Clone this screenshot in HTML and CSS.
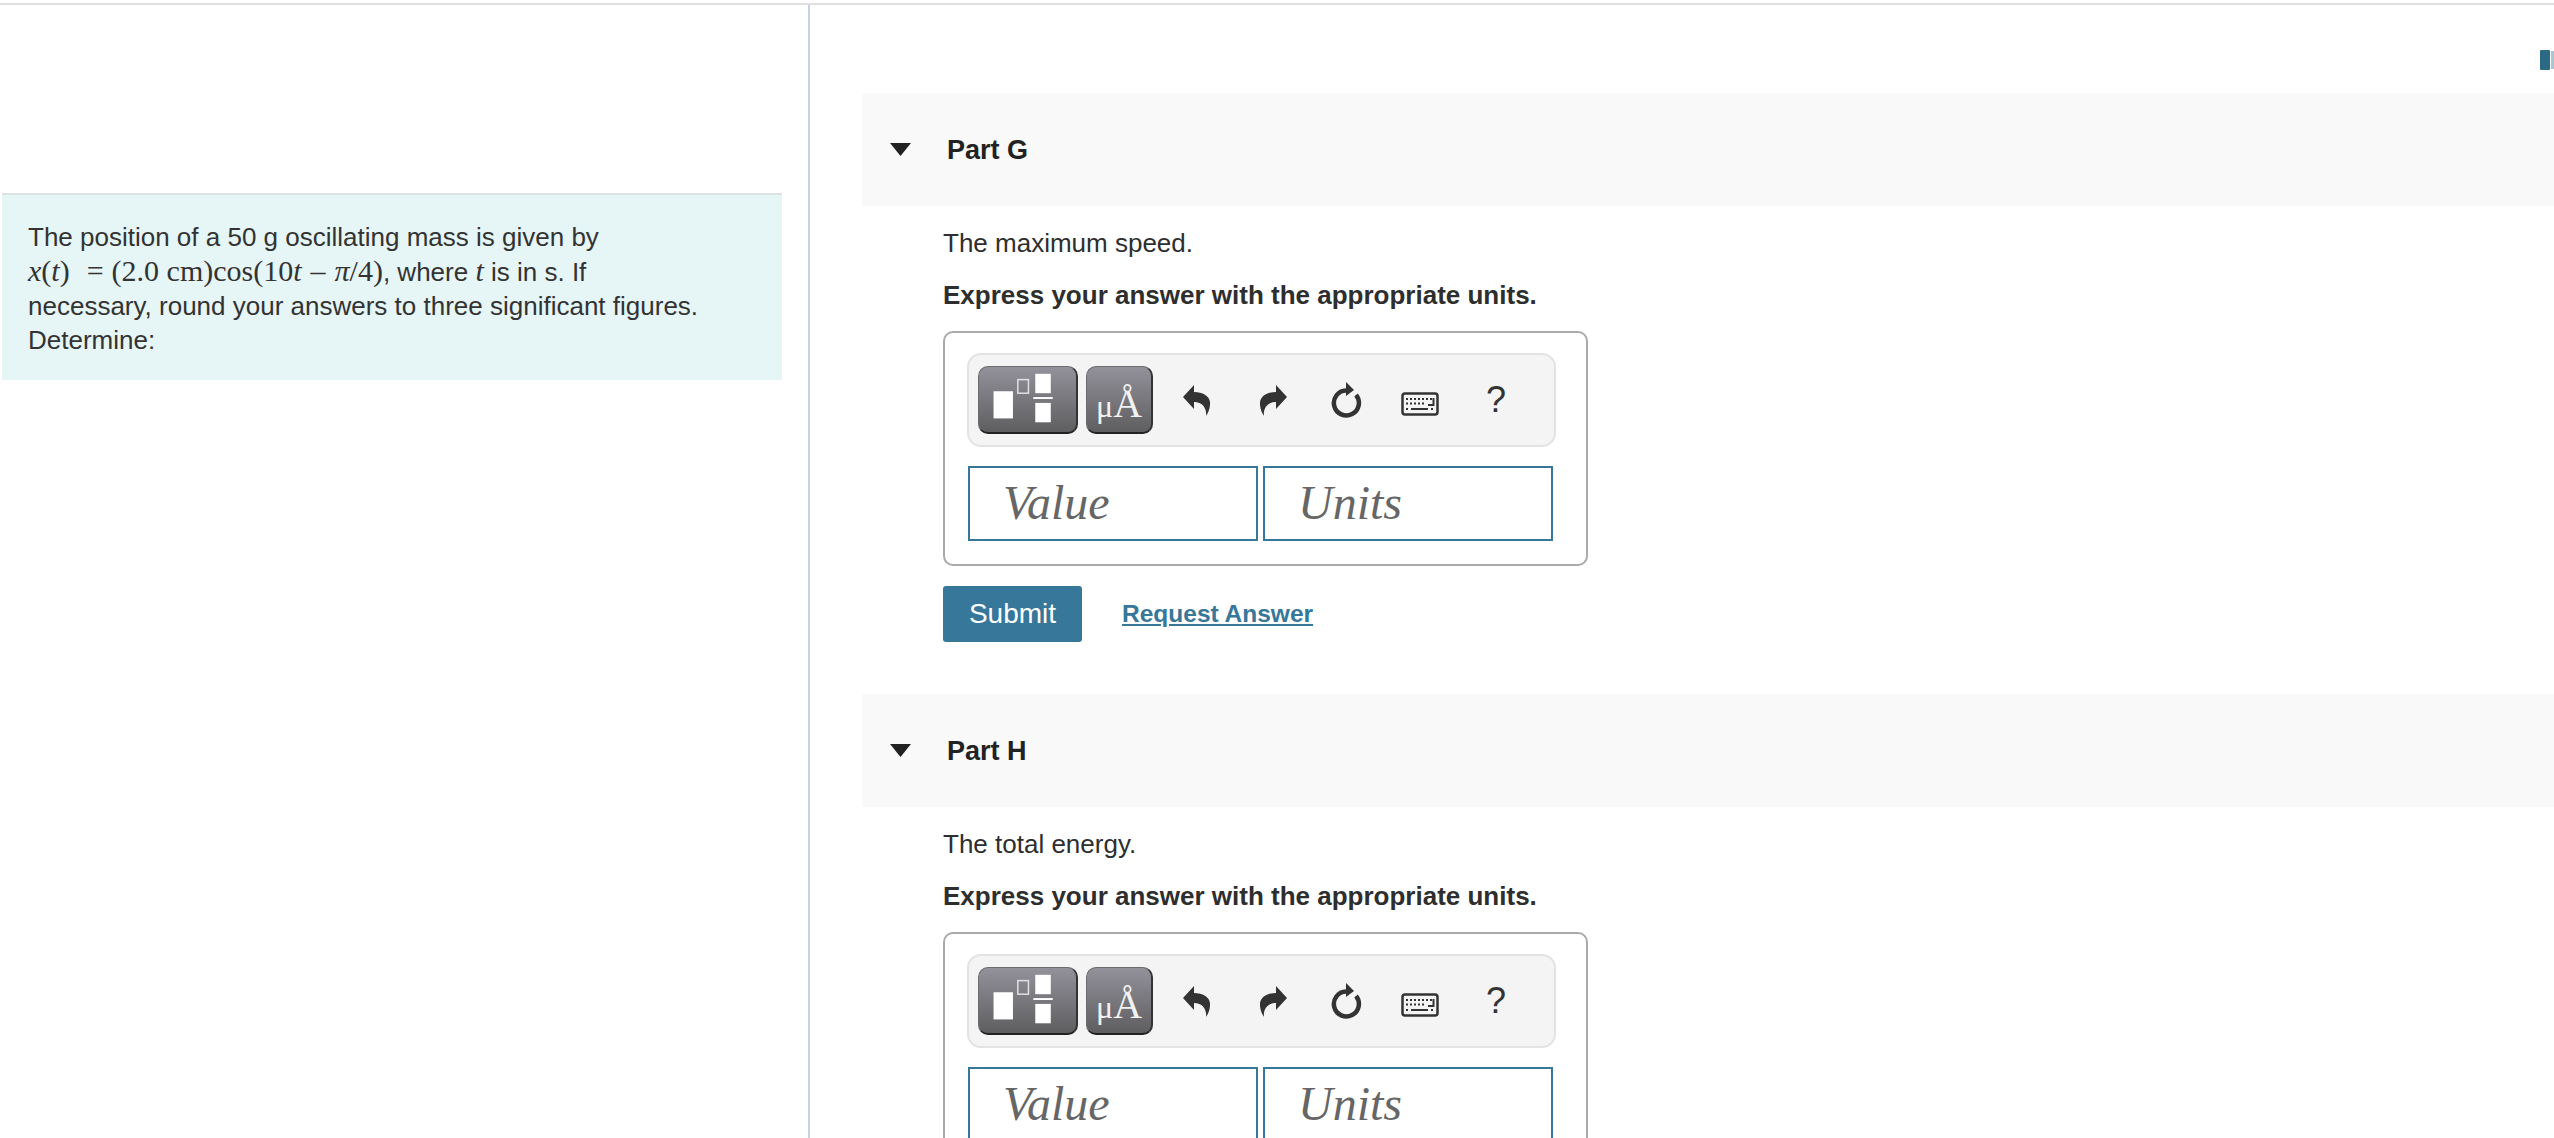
FILE: index.html
```html
<!DOCTYPE html>
<html lang="en">
<head>
<meta charset="utf-8">
<title>Part G and Part H</title>
<link rel="stylesheet" href="styles.css">
</head>
<body>
<div class="page">
  <aside class="left">
    <div class="intro">
      The position of a 50 g oscillating mass is given by<br>
      <span class="math"><i>x</i>(<i>t</i>)<span class="eq">=</span>(2.0 cm)cos(10<i>t</i><span class="minus">–</span><i>π</i>/4)</span>, where <i class="math">t</i> is in s. If<br>
      necessary, round your answers to three significant figures.<br>
      Determine:
    </div>
  </aside>
  <main class="right">
    <svg class="corner" width="14" height="20" viewBox="0 0 14 20"><rect x="0" y="0" width="10" height="20" rx="1" fill="#2b6a86"/><rect x="11" y="1" width="3" height="18" fill="#a9c6d2"/></svg>

    <section class="part">
      <header class="part-head">
        <svg class="caret" width="21" height="13" viewBox="0 0 21 13"><path d="M0 0H21L10.5 13Z" fill="#222"/></svg>
        <h2>Part G</h2>
      </header>
      <div class="part-body">
        <p class="prompt">The maximum speed.</p>
        <p class="instr">Express your answer with the appropriate units.</p>
        <div class="answer">
          <div class="toolbar">
            <button class="tbtn tbtn-wide"><svg width="100" height="67" viewBox="0 0 100 67"><rect x="15" y="25" width="20" height="28" fill="#fff"/><rect x="40" y="13" width="11" height="14" fill="none" stroke="#ddd" stroke-width="1.6"/><rect x="58" y="7" width="16" height="20" fill="#fff"/><rect x="56" y="31" width="20" height="2" fill="#fff"/><rect x="58" y="37" width="16" height="20" fill="#fff"/></svg></button>
            <button class="tbtn tbtn-unit"><span class="mu">μ</span><span class="ang">Å</span></button>
            <svg class="ic ic-undo" width="27" height="31" viewBox="0 0 27 31"><path d="M0 12L11 0V7C21 7 28 12 27 20C26.500 25 25 28 23 31C24 24 20 17 11 17V24Z" fill="#333"/></svg>
            <svg class="ic ic-redo" width="27" height="31" viewBox="0 0 27 31"><path transform="matrix(-1 0 0 1 27 0)" d="M0 12L11 0V7C21 7 28 12 27 20C26.500 25 25 28 23 31C24 24 20 17 11 17V24Z" fill="#333"/></svg>
            <svg class="ic ic-reset" width="32" height="36" viewBox="0 0 32 36"><path d="M26 13A12.500 12.500 0 1 1 16 8.500" fill="none" stroke="#333" stroke-width="4.500"/><path d="M16 0L24 8L16 14Z" fill="#333"/></svg>
            <svg class="ic ic-kbd" width="38" height="24" viewBox="0 0 38 24"><rect x="1.500" y="1.500" width="35" height="21" rx="2.500" fill="none" stroke="#333" stroke-width="2.500"/><path d="M5 7H31M5 11.500H24" stroke="#333" stroke-width="2" stroke-dasharray="2 2" fill="none"/><path d="M32.500 6V13H27" stroke="#333" stroke-width="2" fill="none"/><path d="M5 17H7M10 17H27M30 17H32" stroke="#333" stroke-width="2" fill="none"/></svg>
            <span class="help">?</span>
          </div>
          <div class="fields">
            <div class="field">Value</div>
            <div class="field">Units</div>
          </div>
        </div>
        <div class="actions">
          <button class="submit">Submit</button>
          <a class="req" href="#">Request Answer</a>
        </div>
      </div>
    </section>

    <section class="part">
      <header class="part-head">
        <svg class="caret" width="21" height="13" viewBox="0 0 21 13"><path d="M0 0H21L10.5 13Z" fill="#222"/></svg>
        <h2>Part H</h2>
      </header>
      <div class="part-body">
        <p class="prompt">The total energy.</p>
        <p class="instr">Express your answer with the appropriate units.</p>
        <div class="answer">
          <div class="toolbar">
            <button class="tbtn tbtn-wide"><svg width="100" height="67" viewBox="0 0 100 67"><rect x="15" y="25" width="20" height="28" fill="#fff"/><rect x="40" y="13" width="11" height="14" fill="none" stroke="#ddd" stroke-width="1.6"/><rect x="58" y="7" width="16" height="20" fill="#fff"/><rect x="56" y="31" width="20" height="2" fill="#fff"/><rect x="58" y="37" width="16" height="20" fill="#fff"/></svg></button>
            <button class="tbtn tbtn-unit"><span class="mu">μ</span><span class="ang">Å</span></button>
            <svg class="ic ic-undo" width="27" height="31" viewBox="0 0 27 31"><path d="M0 12L11 0V7C21 7 28 12 27 20C26.500 25 25 28 23 31C24 24 20 17 11 17V24Z" fill="#333"/></svg>
            <svg class="ic ic-redo" width="27" height="31" viewBox="0 0 27 31"><path transform="matrix(-1 0 0 1 27 0)" d="M0 12L11 0V7C21 7 28 12 27 20C26.500 25 25 28 23 31C24 24 20 17 11 17V24Z" fill="#333"/></svg>
            <svg class="ic ic-reset" width="32" height="36" viewBox="0 0 32 36"><path d="M26 13A12.500 12.500 0 1 1 16 8.500" fill="none" stroke="#333" stroke-width="4.500"/><path d="M16 0L24 8L16 14Z" fill="#333"/></svg>
            <svg class="ic ic-kbd" width="38" height="24" viewBox="0 0 38 24"><rect x="1.500" y="1.500" width="35" height="21" rx="2.500" fill="none" stroke="#333" stroke-width="2.500"/><path d="M5 7H31M5 11.500H24" stroke="#333" stroke-width="2" stroke-dasharray="2 2" fill="none"/><path d="M32.500 6V13H27" stroke="#333" stroke-width="2" fill="none"/><path d="M5 17H7M10 17H27M30 17H32" stroke="#333" stroke-width="2" fill="none"/></svg>
            <span class="help">?</span>
          </div>
          <div class="fields">
            <div class="field">Value</div>
            <div class="field">Units</div>
          </div>
        </div>
      </div>
    </section>
  </main>
</div>
</body>
</html>
```
FILE: styles.css
```css
* { box-sizing: border-box; }
html, body { margin: 0; padding: 0; height: 100%; overflow: hidden; background: #fff; }
body { font-family: "Liberation Sans", Arial, sans-serif; font-size: 26px; line-height: 34px; color: #2e2e2e; }
.page { display: flex; height: 1138px; margin-top: 3px; border-top: 2px solid #e0e0e0; overflow: hidden; }

.left { flex: 0 0 808px; padding: 188px 26px 0 2px; }
.intro { background: #e6f5f6; border-top: 2px solid #dde3e4; padding: 25px 10px 23px 26px; color: #333; white-space: nowrap; }
.math { font-family: "Liberation Serif", "Times New Roman", serif; font-size: 30px; }
.eq { margin: 0 8px 0 17px; }
.minus { margin: 0 9px; }

.right { position: relative; flex: 1; min-width: 0; border-left: 2px solid #c5d5e6; padding: 88px 0 0 52px; }
.corner { position: absolute; right: 0; top: 45px; }

.part { margin-bottom: 52px; }
.part-head { display: flex; align-items: center; height: 113px; background: #f9f9f9; padding-left: 28px; }
.caret { margin-top: -1px; }
.part-head h2 { margin: 0 0 0 36px; font-size: 27px; font-weight: 700; color: #222; line-height: 34px; }
.part-body { padding: 20px 0 0 81px; }
.prompt { margin: 0; }
.instr { margin: 18px 0 19px; font-weight: 700; }

.answer { width: 645px; height: 235px; border: 2px solid #aaa; border-radius: 10px; padding: 20px 0 0 22px; }
.toolbar { display: flex; align-items: center; width: 589px; height: 94px; padding-left: 9px; background: #f4f4f4; border: 2px solid #e3e3e3; border-radius: 14px; }
.tbtn { display: flex; align-items: center; justify-content: center; height: 68px; padding: 0; border: 1px solid #6c6c6e; border-right: 2px solid #333; border-bottom: 2px solid #222; border-radius: 10px; background: linear-gradient(#93919a, #5e5e60); color: #f2f2f2; }
.tbtn-wide { width: 100px; }
.tbtn-unit { width: 67px; margin-left: 8px; align-items: baseline; padding-top: 17px; font-family: "Liberation Serif", "Times New Roman", serif; line-height: 40px; }
.mu { font-size: 32px; }
.ang { font-size: 40px; }
.ic { flex: none; }
.ic-undo { margin-left: 30px; }
.ic-redo { margin-left: 50px; }
.ic-reset { margin-left: 43px; }
.ic-kbd { margin-left: 39px; margin-top: 8px; }
.help { margin-left: 47px; font-size: 36px; color: #333; line-height: 40px; }

.fields { display: flex; gap: 5px; margin: 19px 0 0 1px; }
.field { width: 290px; height: 75px; border: 2px solid #37779a; padding-left: 33px; font-family: "Liberation Serif", "Times New Roman", serif; font-style: italic; font-size: 48px; line-height: 70px; color: #666; }

.actions { display: flex; align-items: center; margin-top: 20px; }
.submit { width: 139px; height: 56px; padding: 0; border: 0; border-radius: 3px; background: #37779a; color: #fff; font-family: inherit; font-size: 28px; }
.req { margin-left: 40px; font-size: 24.500px; font-weight: 700; color: #37779a; text-decoration: underline; }
```
